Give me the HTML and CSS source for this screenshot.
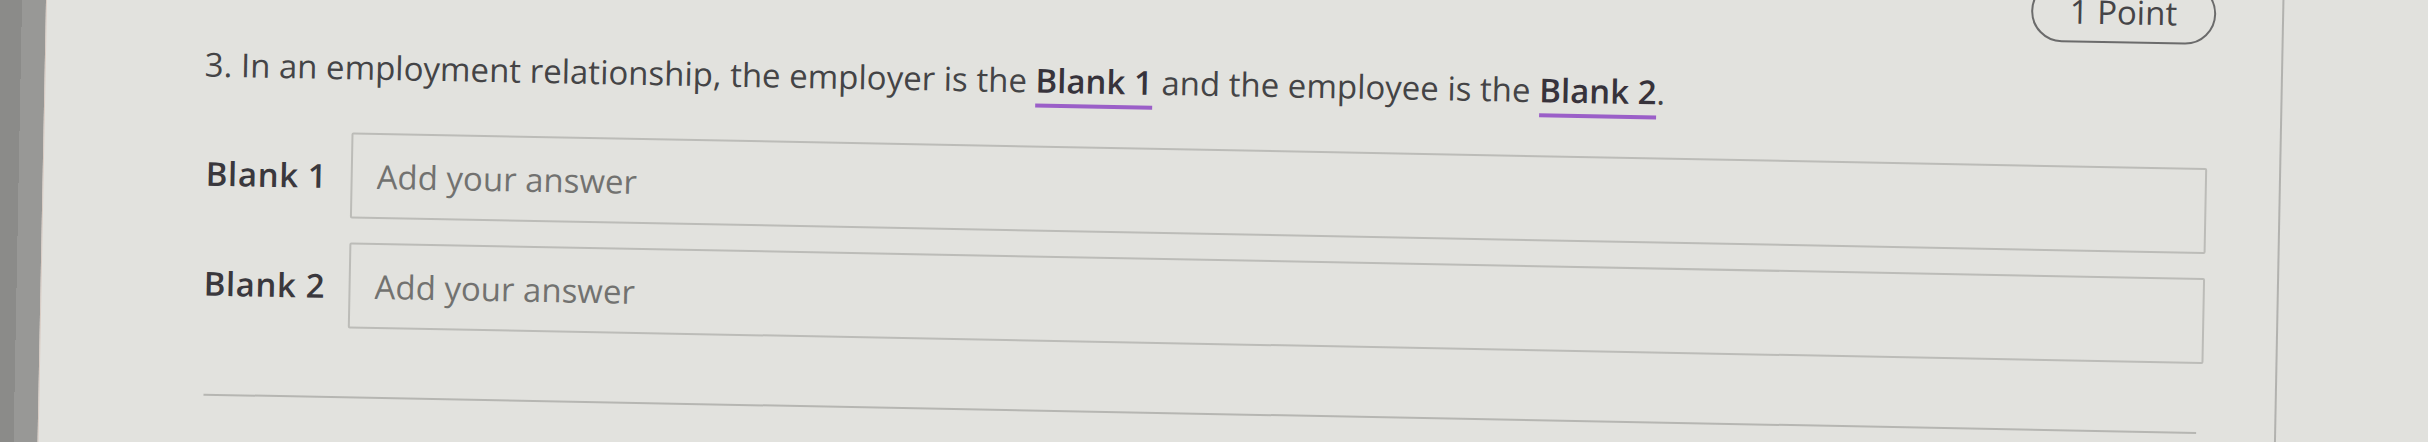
FILE: index.html
```html
<!DOCTYPE html>
<html lang="en">
<head>
    <meta charset="UTF-8">
    <meta name="viewport" content="width=device-width, initial-scale=1.0">
    <link rel="stylesheet" href="styles.css">
    <title>Quiz - Question 3</title>
</head>
<body>
  <div class="frame">
    <div class="screen">
      <div class="sidebar"></div>

      <!-- Question 3 -->
      <div class="main">
        <div class="points-row">
          <span class="points">1 Point</span>
        </div>

        <p class="question">3. In an employment relationship, the employer is the <span class="blank">Blank 1</span> and the employee is the <span class="blank">Blank 2</span>.</p>

        <div class="answers">
          <div class="answer-row">
            <label for="blank1">Blank 1</label>
            <input type="text" id="blank1" placeholder="Add your answer" />
          </div>
          <div class="answer-row">
            <label for="blank2">Blank 2</label>
            <input type="text" id="blank2" placeholder="Add your answer" />
          </div>
        </div>

        <hr class="divider" />
      </div>

      <div class="rail"></div>
    </div>
  </div>
</body>
</html>
```

FILE: styles.css
```css
body {
  margin: 0;
  font-family: "Open Sans", "Noto Sans", Arial, sans-serif;
  background-color: #e2e2de;
}
.frame {
  width: 2428px;
  height: 442px;
  overflow: hidden;
}
/* the page is a little tilted, so it is drawn oversized and turned */
.screen {
  display: flex;
  width: 2500px;
  height: 520px;
  margin: -39px 0 0 -36px;
  transform: rotate(1.1deg);
  transform-origin: 50% 50%;
  background-color: #e2e2de;
}
.sidebar {
  width: 78px;
  flex-shrink: 0;
  background: linear-gradient(to right, #8b8b89 0, #8b8b89 54px, #989896 54px);
  border-right: 1px solid #d9ccc4;
}
.main {
  flex: 1;
  padding: 0 72px 0 162px;
  margin-top: 3px;
}
.points-row {
  display: flex;
  justify-content: flex-end;
  margin-right: -6px;
}
.points {
  display: inline-block;
  height: 58px;
  line-height: 58px;
  padding: 0 37px;
  border: 2px solid #6b6b6b;
  border-radius: 32px;
  font-size: 33px;
  color: #454447;
}
.question {
  margin: 37px 0 0 -3px;
  font-size: 33px;
  line-height: 42px;
  color: #444446;
}
.blank {
  font-weight: 600;
  color: #37333b;
  padding-bottom: 1px;
  border-bottom: 4px solid #9b5fc8;
}
.answers {
  margin-top: 44px;
  display: flex;
  flex-direction: column;
  gap: 24px;
}
.answer-row {
  display: flex;
  align-items: center;
}
.answer-row label {
  width: 145px;
  flex-shrink: 0;
  font-size: 33px;
  font-weight: 600;
  letter-spacing: 0.6px;
  color: #3a383d;
}
.answer-row input {
  flex: 1;
  height: 86px;
  box-sizing: border-box;
  padding: 0 24px;
  border: 2px solid #bcbcb8;
  border-radius: 2px;
  background: transparent;
  font-family: inherit;
  font-size: 33px;
  color: #3a3a3a;
}
.answer-row input::placeholder {
  color: #727270;
}
.divider {
  margin: 68px 6px 0 2px;
  border: none;
  border-top: 2px solid #b6b6b2;
}
.rail {
  width: 184px;
  flex-shrink: 0;
  border-left: 2px solid #b2b2af;
  background-color: #e1e1dd;
}
```
